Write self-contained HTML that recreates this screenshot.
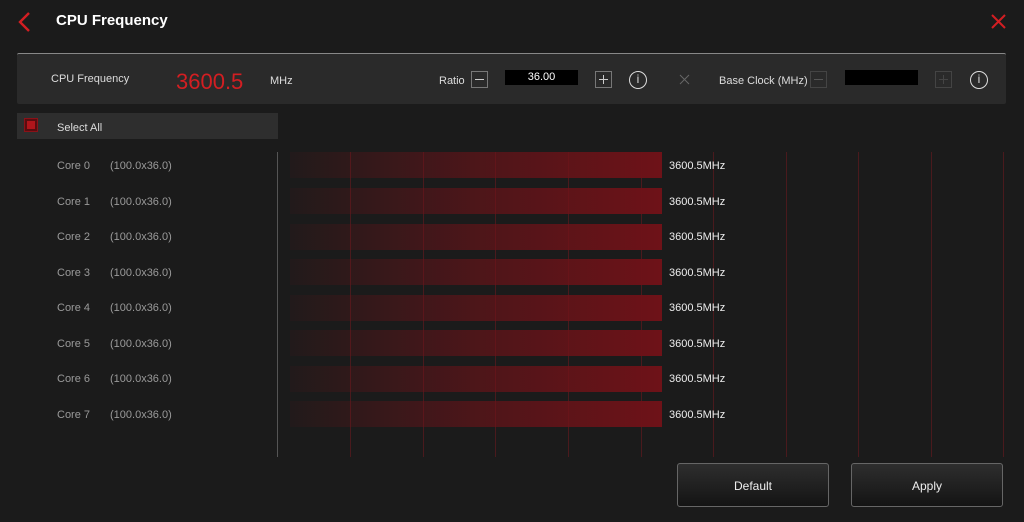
<!DOCTYPE html>
<html><head><style>
body{margin:0;width:1024px;height:522px;background:#1b1b1b;font-family:"Liberation Sans",sans-serif;color:#ddd;position:relative;overflow:hidden}
.a{position:absolute}
.t{font-size:11px;color:#ddd}
.g{color:#9a9a9a;font-size:11px}
.bar{position:absolute;left:290px;width:372px;height:26px;background:linear-gradient(90deg,rgba(110,18,24,0.08),rgba(110,18,24,0.6) 50%,#6e1218)}
.vl{position:absolute;top:152px;height:305px;width:1px;background:#4a1a1d}
.sq{position:absolute;width:17px;height:17px;border:1px solid #777;box-sizing:border-box;background:#2a2a2a}
.btn{position:absolute;top:463px;width:152px;height:44px;border:1px solid #666;border-radius:3px;box-sizing:border-box;background:linear-gradient(#2e2e2e,#141414);color:#eee;font-size:12px;text-align:center;line-height:44px}
.inf{position:absolute;width:18px;height:18px;border:1.5px solid #ddd;border-radius:50%;box-sizing:border-box;text-align:center;font:12px/15px "Liberation Sans",sans-serif;color:#ddd}
</style></head><body>
<svg class="a" style="left:16px;top:11px" width="16" height="22"><path d="M13 2 L4 11 L13 20" stroke="#d31e22" stroke-width="2.4" fill="none"/></svg>
<div class="a" style="left:56px;top:12px;font-size:15px;font-weight:bold;color:#fff">CPU Frequency</div>
<svg class="a" style="left:990px;top:13px" width="17" height="17"><path d="M2 2L15 15M15 2L2 15" stroke="#d31e22" stroke-width="2"/></svg>
<div class="a" style="left:17px;top:53px;width:989px;height:51px;background:#2a2a2a;border-top:1px solid #888;box-sizing:border-box;border-radius:2px"></div>
<div class="a t" style="left:51px;top:73px">CPU Frequency</div>
<div class="a" style="left:176px;top:69px;font-size:22px;color:#d31e22">3600.5</div>
<div class="a t" style="left:270px;top:75px">MHz</div>
<div class="a t" style="left:439px;top:75px">Ratio</div>
<div class="sq" style="left:471px;top:71px"><div class="a" style="left:3px;top:7px;width:9px;height:1px;background:#ccc"></div></div>
<div class="a" style="left:505px;top:70px;width:73px;height:15px;background:#000;color:#fff;font-size:11px;text-align:center;line-height:15px">36.00</div>
<div class="sq" style="left:595px;top:71px"><div class="a" style="left:3px;top:7px;width:9px;height:1px;background:#ccc"></div><div class="a" style="left:7px;top:3px;width:1px;height:9px;background:#ccc"></div></div>
<div class="inf" style="left:629px;top:71px">i</div>
<svg class="a" style="left:679px;top:74px" width="11" height="11"><path d="M1 1L10 10M10 1L1 10" stroke="#666" stroke-width="1"/></svg>
<div class="a t" style="left:719px;top:75px">Base Clock (MHz)</div>
<div class="sq" style="left:810px;top:71px;border-color:#444"><div class="a" style="left:3px;top:7px;width:9px;height:1px;background:#555"></div></div>
<div class="a" style="left:845px;top:70px;width:73px;height:15px;background:#000"></div>
<div class="sq" style="left:935px;top:71px;border-color:#444"><div class="a" style="left:3px;top:7px;width:9px;height:1px;background:#444"></div><div class="a" style="left:7px;top:3px;width:1px;height:9px;background:#444"></div></div>
<div class="inf" style="left:970px;top:71px">i</div>
<div class="a" style="left:17px;top:113px;width:261px;height:26px;background:#2e2e2e"></div>
<div class="a" style="left:24px;top:118px;width:14px;height:14px;background:#5a0c10;border:1px solid #8a1218;box-sizing:border-box"><div class="a" style="left:2px;top:2px;width:8px;height:8px;background:#b0151b"></div></div>
<div class="a t" style="left:57px;top:122px">Select All</div>
<div class="vl" style="left:277px;background:#555"></div>
<div class="vl" style="left:350px"></div><div class="vl" style="left:423px"></div><div class="vl" style="left:495px"></div><div class="vl" style="left:568px"></div><div class="vl" style="left:641px"></div><div class="vl" style="left:713px"></div><div class="vl" style="left:786px"></div><div class="vl" style="left:858px"></div><div class="vl" style="left:931px"></div><div class="vl" style="left:1003px"></div>
<div class="bar" style="top:152px"></div><div class="bar" style="top:188px"></div><div class="bar" style="top:224px"></div><div class="bar" style="top:259px"></div><div class="bar" style="top:295px"></div><div class="bar" style="top:330px"></div><div class="bar" style="top:366px"></div><div class="bar" style="top:401px"></div>
<div class="a g" style="left:57px;top:149px;line-height:35.5px">Core 0<br>Core 1<br>Core 2<br>Core 3<br>Core 4<br>Core 5<br>Core 6<br>Core 7</div>
<div class="a g" style="left:110px;top:149px;line-height:35.5px">(100.0x36.0)<br>(100.0x36.0)<br>(100.0x36.0)<br>(100.0x36.0)<br>(100.0x36.0)<br>(100.0x36.0)<br>(100.0x36.0)<br>(100.0x36.0)</div>
<div class="a t" style="left:669px;top:149px;line-height:35.5px;color:#eee">3600.5MHz<br>3600.5MHz<br>3600.5MHz<br>3600.5MHz<br>3600.5MHz<br>3600.5MHz<br>3600.5MHz<br>3600.5MHz</div>
<div class="btn" style="left:677px">Default</div>
<div class="btn" style="left:851px">Apply</div>
</body></html>
